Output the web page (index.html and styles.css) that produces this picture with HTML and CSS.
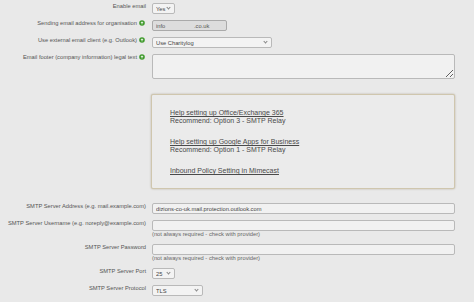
FILE: index.html
```html
<!DOCTYPE html>
<html lang="en">
<head>
    <meta charset="UTF-8">
    <meta name="viewport" content="width=device-width, initial-scale=1.0">
    <title>Email Settings</title>
    <link rel="stylesheet" href="styles.css">
</head>
<body>
    <div class="form">
        <div class="row">
            <div class="label">Enable email</div>
            <div class="field">
                <span class="select w-small"><select><option>Yes</option></select></span>
            </div>
        </div>

        <div class="row">
            <div class="label">Sending email address for organisation <span class="help"><svg viewBox="0 0 6 6" width="6" height="6"><circle cx="3" cy="3" r="2.8" fill="#3f9a2c"/><path d="M3 4.4V2M1.9 3L3 1.8 4.1 3" stroke="#fff" stroke-width="0.8" fill="none"/></svg></span></div>
            <div class="field">
                <input class="input disabled w-mid" type="text" value="info                  .co.uk" disabled>
            </div>
        </div>

        <div class="row">
            <div class="label">Use external email client (e.g. Outlook) <span class="help"><svg viewBox="0 0 6 6" width="6" height="6"><circle cx="3" cy="3" r="2.8" fill="#3f9a2c"/><path d="M3 4.4V2M1.9 3L3 1.8 4.1 3" stroke="#fff" stroke-width="0.8" fill="none"/></svg></span></div>
            <div class="field">
                <span class="select w-wide"><select><option>Use Charitylog</option></select></span>
            </div>
        </div>

        <div class="row">
            <div class="label">Email footer (company information) legal text <span class="help"><svg viewBox="0 0 6 6" width="6" height="6"><circle cx="3" cy="3" r="2.8" fill="#3f9a2c"/><path d="M3 4.4V2M1.9 3L3 1.8 4.1 3" stroke="#fff" stroke-width="0.8" fill="none"/></svg></span></div>
            <div class="field">
                <textarea class="textarea"></textarea>
            </div>
        </div>

        <div class="row">
            <div class="label"></div>
            <div class="field">
                <div class="info-box">
                    <p><a href="#">Help setting up Office/Exchange 365</a><br>Recommend: Option 3 - SMTP Relay</p>
                    <p><a href="#">Help setting up Google Apps for Business</a><br>Recommend: Option 1 - SMTP Relay</p>
                    <p><a href="#">Inbound Policy Setting in Mimecast</a></p>
                </div>
            </div>
        </div>

        <div class="row">
            <div class="label">SMTP Server Address (e.g. mail.example.com)</div>
            <div class="field">
                <input class="input" type="text" value="dizions-co-uk.mail.protection.outlook.com">
            </div>
        </div>

        <div class="row">
            <div class="label">SMTP Server Username (e.g. noreply@example.com)</div>
            <div class="field">
                <input class="input" type="text">
                <div class="note">(not always required - check with provider)</div>
            </div>
        </div>

        <div class="row">
            <div class="label">SMTP Server Password</div>
            <div class="field">
                <input class="input" type="password">
                <div class="note">(not always required - check with provider)</div>
            </div>
        </div>

        <div class="row">
            <div class="label">SMTP Server Port</div>
            <div class="field">
                <span class="select w-small"><select><option>25</option></select></span>
            </div>
        </div>

        <div class="row">
            <div class="label">SMTP Server Protocol</div>
            <div class="field">
                <span class="select w-proto"><select><option>TLS</option></select></span>
            </div>
        </div>
    </div>
</body>
</html>
```

FILE: styles.css
```css
body {
    font-family: "Liberation Sans", Arial, sans-serif;
    font-size: 5.75px;
    color: #555;
    margin: 0;
    padding: 3px 0 0;
    background-color: #e9e9e9;
}

.row {
    display: grid;
    grid-template-columns: 146px 303px;
    column-gap: 6px;
    margin-bottom: 6px;
}

.label {
    display: flex;
    justify-content: flex-end;
    align-items: flex-start;
    gap: 2px;
    text-align: right;
    line-height: 8px;
    color: #555;
    white-space: nowrap;
    margin-top: -1px;
}

.help {
    display: inline-flex;
    width: 6px;
    height: 8px;
    align-items: center;
    margin-right: 1px;
}

.field {
    display: flex;
    flex-direction: column;
    align-items: flex-start;
}

.input,
.textarea {
    box-sizing: border-box;
    width: 303px;
    height: 11px;
    padding: 0 3px;
    border: 1px solid #b9b9b9;
    border-radius: 2px;
    background: #f1f1f1;
    font-family: inherit;
    font-size: 5.75px;
    color: #444;
    outline: none;
}

.input.disabled {
    background: #dddddd;
    border-color: #aaa;
    color: #555;
    white-space: pre;
}

.textarea {
    height: 25px;
    resize: vertical;
}

.w-mid { width: 75px; }

.select {
    position: relative;
    display: inline-block;
}

.select select {
    box-sizing: border-box;
    width: 100%;
    height: 11px;
    padding: 0 3px;
    border: 1px solid #b9b9b9;
    border-radius: 2px;
    background: #f3f3f3;
    font-family: inherit;
    font-size: 5.75px;
    color: #444;
    appearance: none;
    -webkit-appearance: none;
    outline: none;
}

.select::after {
    content: "";
    position: absolute;
    right: 5px;
    top: 3px;
    width: 2px;
    height: 2px;
    border-right: 1px solid #888;
    border-bottom: 1px solid #888;
    transform: rotate(45deg);
    pointer-events: none;
}

.w-small { width: 23px; }
.w-wide { width: 120px; }
.w-proto { width: 51px; }

.info-box {
    box-sizing: border-box;
    width: 304px;
    margin: 9px 0 8px -1px;
    padding: 14px 18px 13px;
    border: 1px solid #cfc6ae;
    border-radius: 2px;
    background: #ebebeb;
    box-shadow: 0 0 2px rgba(120, 100, 60, 0.45);
    font-size: 7px;
    line-height: 8px;
    color: #4a4a4a;
}

.info-box p {
    margin: 0 0 13px;
}

.info-box p:last-child {
    margin-bottom: 0;
}

.info-box a {
    color: #4a4a4a;
    text-decoration: underline;
}

.note {
    line-height: 7px;
    color: #666;
}
```
